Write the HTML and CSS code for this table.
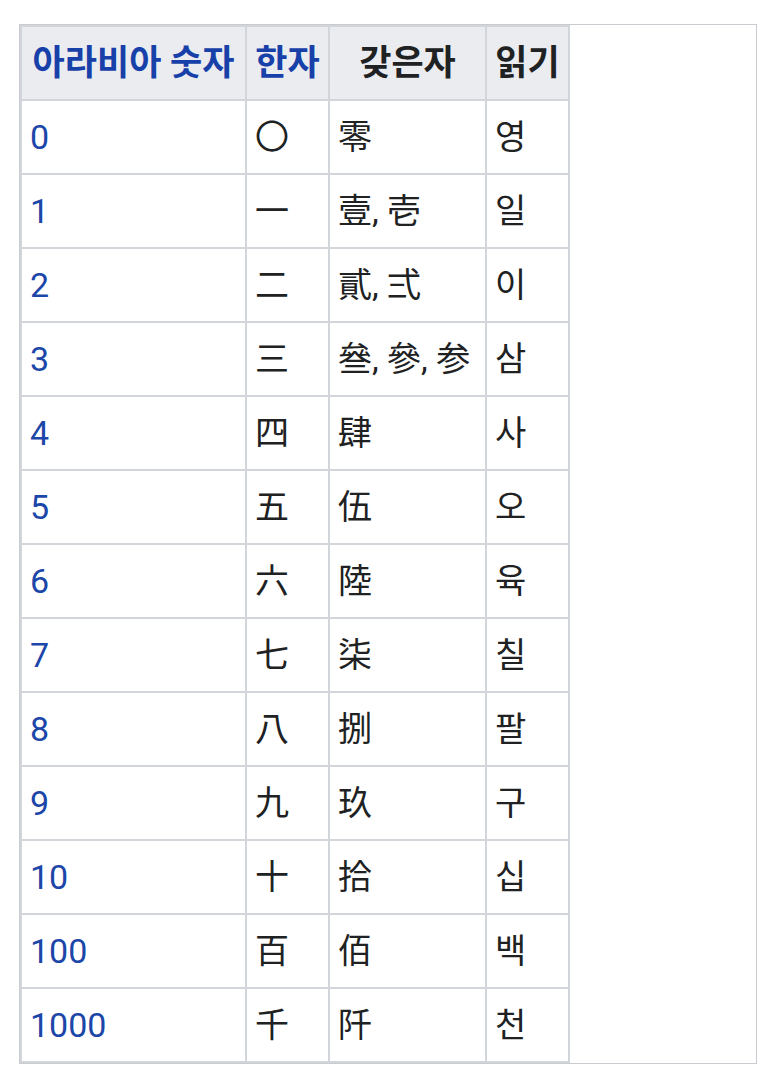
FILE: index.html
```html
<!DOCTYPE html>
<html lang="ko">
<head>
<meta charset="utf-8">
<link rel="stylesheet" href="styles.css">
</head>
<body>
<div class="box">
<table class="nums">
<colgroup><col class="c1"><col class="c2"><col class="c3"><col class="c4"></colgroup>
<thead>
<tr><th><a>아라비아 숫자</a></th><th><a>한자</a></th><th>갖은자</th><th>읽기</th></tr>
</thead>
<tbody>
<tr><td><a>0</a></td><td>〇</td><td>零</td><td>영</td></tr>
<tr><td><a>1</a></td><td>一</td><td>壹, 壱</td><td>일</td></tr>
<tr><td><a>2</a></td><td>二</td><td>貳, 弍</td><td>이</td></tr>
<tr><td><a>3</a></td><td>三</td><td>叄, 參, 参</td><td>삼</td></tr>
<tr><td><a>4</a></td><td>四</td><td>肆</td><td>사</td></tr>
<tr><td><a>5</a></td><td>五</td><td>伍</td><td>오</td></tr>
<tr><td><a>6</a></td><td>六</td><td>陸</td><td>육</td></tr>
<tr><td><a>7</a></td><td>七</td><td>柒</td><td>칠</td></tr>
<tr><td><a>8</a></td><td>八</td><td>捌</td><td>팔</td></tr>
<tr><td><a>9</a></td><td>九</td><td>玖</td><td>구</td></tr>
<tr><td><a>10</a></td><td>十</td><td>拾</td><td>십</td></tr>
<tr><td><a>100</a></td><td>百</td><td>佰</td><td>백</td></tr>
<tr><td><a>1000</a></td><td>千</td><td>阡</td><td>천</td></tr>
</tbody>
</table>
</div>
</body>
</html>
```
FILE: styles.css
```css
html, body { margin: 0; padding: 0; background: #ffffff; }
body {
  font-family: Roboto, "Noto Sans CJK KR", sans-serif;
  color: #202122;
  padding: 24px 0 0 19px;
}
.box {
  width: 736px;
  height: 1038px;
  border: 1px solid #c8ccd1;
  background: #fff;
}
.nums {
  border-collapse: collapse;
  table-layout: fixed;
  width: 548px;
  border: 2px solid #c8ccd1;
  font-size: 34px;
  line-height: 1;
}
.nums th, .nums td {
  border: 2px solid #d2d5d9;
  padding: 0 8px;
  height: 72px;
  text-align: left;
  vertical-align: middle;
  white-space: nowrap;
}
.nums th {
  background: #eaecf0;
  font-weight: 700;
  font-size: 35px;
  text-align: center;
  height: 72px;
  padding: 0 3px;
}
.nums a { color: #1c46a8; text-decoration: none; }
.nums th a { color: #1740a8; }
.c1 { width: 225px; }
.c2 { width: 83px; }
.c3 { width: 157px; }
.c4 { width: 83px; }
```
